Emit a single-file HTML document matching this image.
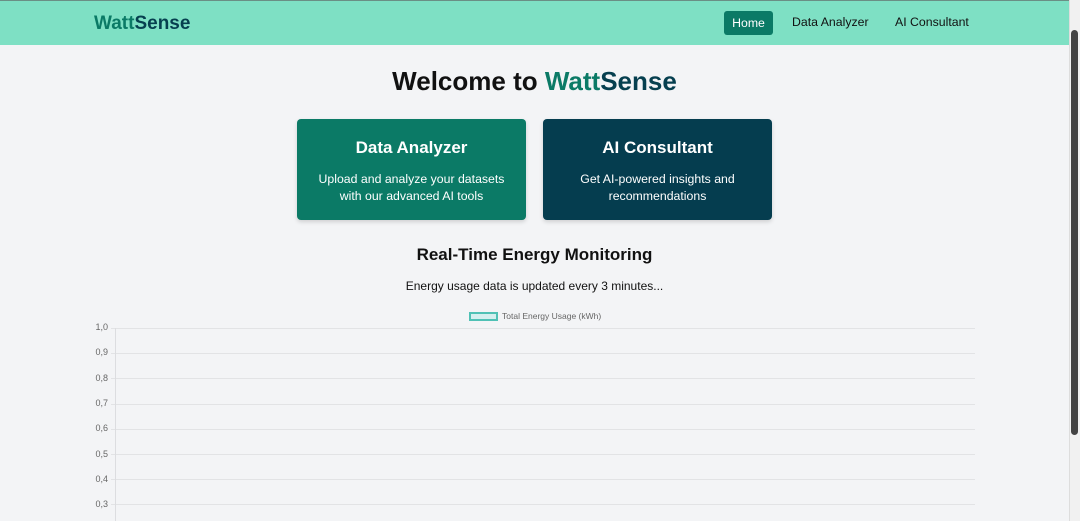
<!DOCTYPE html>
<html><head><meta charset="utf-8"><style>
*{margin:0;padding:0;box-sizing:border-box}
body{width:1080px;height:521px;overflow:hidden;background:#f3f4f6;font-family:"Liberation Sans",sans-serif;position:relative;color:#111}
.hdr{position:absolute;left:0;top:0;width:1069px;height:45px;background:#7ee0c4;border-top:1px solid #6a8f85}
.logo{position:absolute;left:94px;top:13px;font-size:19px;font-weight:bold;color:#0b7a66}
.logo span{color:#063f4f}
.nav{position:absolute;top:11px;font-size:12.3px;color:#111}
.home{left:724px;width:49px;height:24px;background:#0b7a66;color:#fff;border-radius:3px;text-align:center;line-height:24px;top:11px}
h1{position:absolute;left:0;width:1069px;top:66px;text-align:center;font-size:26px;font-weight:bold}
h1 .a{color:#0b7a66}h1 .b{color:#063f4f}
.card{position:absolute;top:119px;width:229px;height:101px;border-radius:4px;color:#fff;text-align:center;box-shadow:0 2px 4px rgba(0,0,0,.15)}
.card h3{font-size:17px;margin-top:19px;font-weight:bold}
.card p{font-size:12.3px;line-height:17px;margin-top:13px}
h2{position:absolute;left:0;width:1069px;top:245px;text-align:center;font-size:17px;font-weight:bold;color:#111}
.sub{position:absolute;left:0;width:1069px;top:279px;text-align:center;font-size:12px}
.leg{position:absolute;left:469px;top:312px;width:29px;height:9px;border:2px solid #4fc1b5;background:#d4efef}
.legt{position:absolute;left:502px;top:311px;font-size:8.5px;color:#666}
.gl{position:absolute;left:111px;width:864px;height:1px;background:#e2e3e5}
.yl{position:absolute;left:80px;width:28px;text-align:right;font-size:9px;color:#666}
.ax{position:absolute;left:115px;top:328px;width:1px;height:193px;background:#dcdde0}
.sb{position:absolute;left:1069px;top:0;width:11px;height:521px;background:#f1f1f1;border-left:1px solid #ddd}
.th{position:absolute;left:1071px;top:30px;width:7px;height:405px;background:#444;border-radius:4px}
</style></head><body>
<div class="hdr"></div>
<div class="logo">Watt<span>Sense</span></div>
<div class="nav home">Home</div>
<div class="nav" style="left:792px;top:15px">Data Analyzer</div>
<div class="nav" style="left:895px;top:15px">AI Consultant</div>
<h1>Welcome to <span class="a">Watt</span><span class="b">Sense</span></h1>
<div class="card" style="left:297px;background:#0b7a66"><h3>Data Analyzer</h3><p>Upload and analyze your datasets<br>with our advanced AI tools</p></div>
<div class="card" style="left:543px;background:#053d4f"><h3>AI Consultant</h3><p>Get AI-powered insights and<br>recommendations</p></div>
<h2>Real-Time Energy Monitoring</h2>
<div class="sub">Energy usage data is updated every 3 minutes...</div>
<div class="leg"></div><div class="legt">Total Energy Usage (kWh)</div>
<div class="gl" style="top:328px"></div><div class="yl" style="top:322px">1,0</div>
<div class="gl" style="top:353px"></div><div class="yl" style="top:347px">0,9</div>
<div class="gl" style="top:378px"></div><div class="yl" style="top:373px">0,8</div>
<div class="gl" style="top:404px"></div><div class="yl" style="top:398px">0,7</div>
<div class="gl" style="top:429px"></div><div class="yl" style="top:423px">0,6</div>
<div class="gl" style="top:454px"></div><div class="yl" style="top:449px">0,5</div>
<div class="gl" style="top:479px"></div><div class="yl" style="top:474px">0,4</div>
<div class="gl" style="top:504px"></div><div class="yl" style="top:499px">0,3</div>
<div class="ax"></div>
<div class="sb"></div><div class="th"></div>
</body></html>
